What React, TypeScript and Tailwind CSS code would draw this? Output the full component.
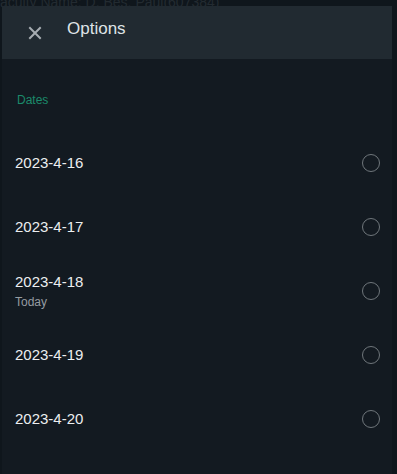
import React from "react";

const dates = [
  { d: "2023-4-16" },
  { d: "2023-4-17" },
  { d: "2023-4-18", sub: "Today" },
  { d: "2023-4-19" },
  { d: "2023-4-20" },
];

export default function App() {
  return (
    <div
      className="relative w-[397px] h-[474px] overflow-hidden bg-[#0f161c] pt-[6px] px-[2px]"
      style={{ fontFamily: '"Liberation Sans", Arial, sans-serif' }}
    >
      <div className="absolute left-0 top-[-8px] text-[14px] text-[#232b31] whitespace-nowrap">
        aculty Name: D. Bes, Paul(607384)
      </div>
      <div className="relative w-[390px] h-[468px] bg-[#131a21] flex flex-col">
        <div className="h-[53px] bg-[#212a31] flex items-start shrink-0">
          <svg
            className="ml-[26px] mt-[20px]"
            width="14"
            height="14"
            viewBox="0 0 14 14"
            fill="none"
            stroke="#a7adb2"
            strokeWidth="2"
            strokeLinecap="square"
          >
            <path d="M2 2L12 12M12 2L2 12" />
          </svg>
          <span className="ml-[25px] mt-[13px] text-[17px] leading-[20px] text-[#dfe3e6]">Options</span>
        </div>
        <div className="h-[72px] pt-[33px] pl-[15px] text-[12px] leading-[16px] text-[#1b8a6b] shrink-0">
          Dates
        </div>
        {dates.map((x) => (
          <div key={x.d} className="h-16 flex items-center justify-between pl-[13px] pr-[12px] shrink-0">
            <div className="flex flex-col">
              <span className="text-[15px] leading-[18px] text-[#eceef0]">{x.d}</span>
              {x.sub && (
                <span className="text-[12px] leading-[16px] mt-[3px] text-[#969ca1]">{x.sub}</span>
              )}
            </div>
            <div className="w-[18px] h-[18px] rounded-full border-[1.5px] border-[#6f767b]" />
          </div>
        ))}
      </div>
    </div>
  );
}
